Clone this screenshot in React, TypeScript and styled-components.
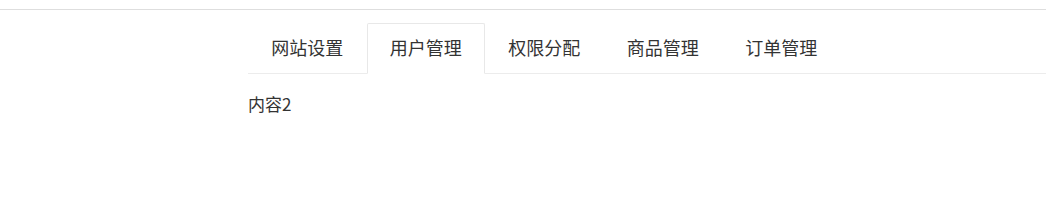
import { useState } from 'react'
import styled, { createGlobalStyle } from 'styled-components'

const GlobalStyle = createGlobalStyle`
    html, body {
        margin: 0;
        padding: 0;
        background: #fff;
    }
    body {
        font-family: "Microsoft YaHei", "Noto Sans CJK SC", "Noto Sans", sans-serif;
        color: #333;
    }
`

const TopRule = styled.div`
    margin-top: 9px;
    height: 1px;
    background-color: #dedede;
`

const TabsWrapper = styled.div`
    margin: 13px 0 0 248px;
`

const TabBar = styled.ul`
    display: flex;
    list-style: none;
    margin: 0;
    padding: 0;
    border-bottom: 1px solid #ececec;
`

const Tab = styled.li<{ $active: boolean }>`
    box-sizing: border-box;
    width: 118.5px;
    height: 51px;
    margin-bottom: -1px;
    padding-bottom: 3px;
    display: flex;
    align-items: center;
    justify-content: center;
    font-size: 18px;
    color: #333;
    cursor: pointer;
    user-select: none;
    border: 1px solid ${(p) => (p.$active ? '#e8e8e8' : 'transparent')};
    border-bottom-color: ${(p) => (p.$active ? '#fff' : 'transparent')};
    border-radius: 2px 2px 0 0;
    background: ${(p) => (p.$active ? '#fff' : 'transparent')};
`

const Content = styled.div`
    margin-top: 18px;
    font-size: 17px;
    line-height: 24px;
    color: #333;
`

const TABS = ['网站设置', '用户管理', '权限分配', '商品管理', '订单管理']

const App = () => {
    const [active, setActive] = useState(1)

    return (
        <>
            <GlobalStyle />
            <TopRule />
            <TabsWrapper>
                <TabBar>
                    {TABS.map((title, i) => (
                        <Tab key={title} $active={i === active} onClick={() => setActive(i)}>
                            {title}
                        </Tab>
                    ))}
                </TabBar>
                <Content>内容{active + 1}</Content>
            </TabsWrapper>
        </>
    )
}

export default App
